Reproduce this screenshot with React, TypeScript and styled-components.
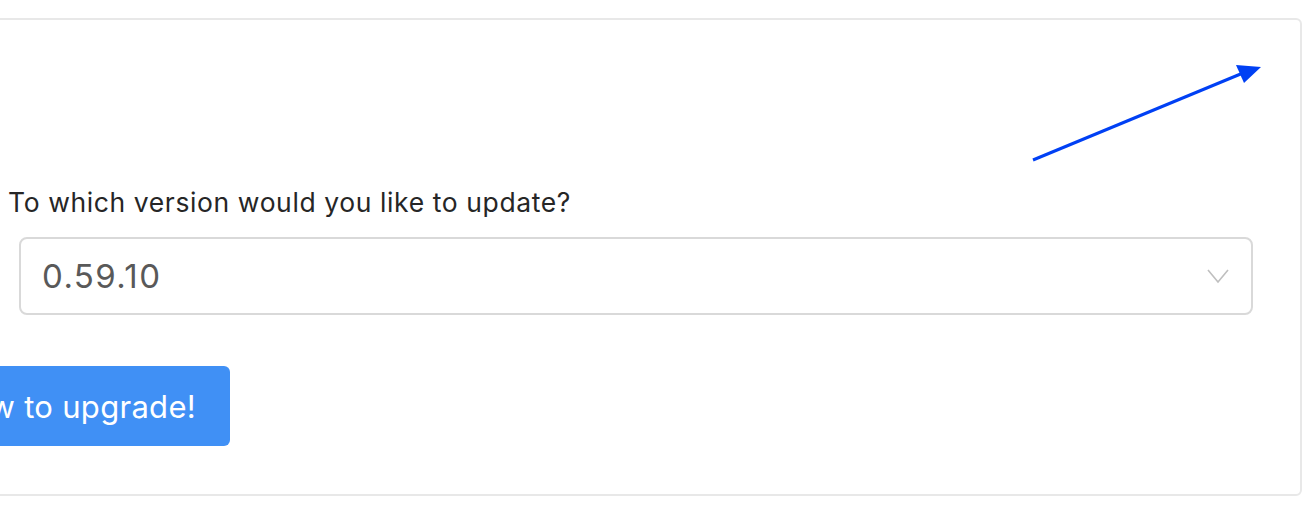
import React from "react";
import styled, { createGlobalStyle } from "styled-components";

const Global = createGlobalStyle`
  html, body { margin: 0; padding: 0; background: #ffffff; overflow: hidden; }
  body { font-family: Inter, "Noto Sans", "Liberation Sans", sans-serif; }
`;

const Page = styled.div`
  width: 1308px;
  height: 514px;
  padding-top: 18px;
  box-sizing: border-box;
`;

const Card = styled.section`
  position: relative;
  margin-left: -60px;
  width: 1362px;
  height: 478px;
  box-sizing: border-box;
  border: 2px solid #e8e8e8;
  border-radius: 6px;
  padding: 164px 0 0 66px;
  display: flex;
  flex-direction: column;
`;

const Label = styled.label`
  font-size: 26.5px;
  line-height: 36px;
  color: #262626;
  letter-spacing: 0.6px;
`;

const Select = styled.div`
  margin: 17px 0 0 11px;
  width: 1234px;
  height: 78px;
  box-sizing: border-box;
  border: 2px solid #d9d9d9;
  border-radius: 8px;
  display: flex;
  align-items: center;
  justify-content: space-between;
  padding: 0 22px 0 21px;
`;

const Value = styled.span`
  font-size: 33px;
  color: #595959;
  letter-spacing: 1.4px;
`;

const ButtonRow = styled.div`
  margin: 51px 0 0 -58px;
  width: 280px;
  display: flex;
  justify-content: flex-end;
`;

const Button = styled.button`
  flex: none;
  height: 80px;
  border: none;
  border-radius: 6px;
  background: #4090f5;
  color: #ffffff;
  font-family: inherit;
  font-size: 31px;
  letter-spacing: 0.3px;
  padding: 0 34px;
  white-space: nowrap;
`;

const Arrow = styled.svg`
  position: absolute;
  left: 1089px;
  top: 43px;
`;

export default function App() {
  return (
    <>
      <Global />
      <Page>
        <Card>
          <Arrow width="240" height="110" viewBox="0 0 240 110">
            <line x1="2" y1="97" x2="212" y2="10" stroke="#0040f4" strokeWidth="3" />
            <polygon points="230,4 205,2 213,20" fill="#0040f4" />
          </Arrow>
          <Label>To which version would you like to update?</Label>
          <Select>
            <Value>0.59.10</Value>
            <svg width="22" height="16" viewBox="0 0 22 16">
              <polyline points="1,2 11,14 21,2" fill="none" stroke="#bfbfbf" strokeWidth="1.6" />
            </svg>
          </Select>
          <ButtonRow>
            <Button>Show me how to upgrade!</Button>
          </ButtonRow>
        </Card>
      </Page>
    </>
  );
}
